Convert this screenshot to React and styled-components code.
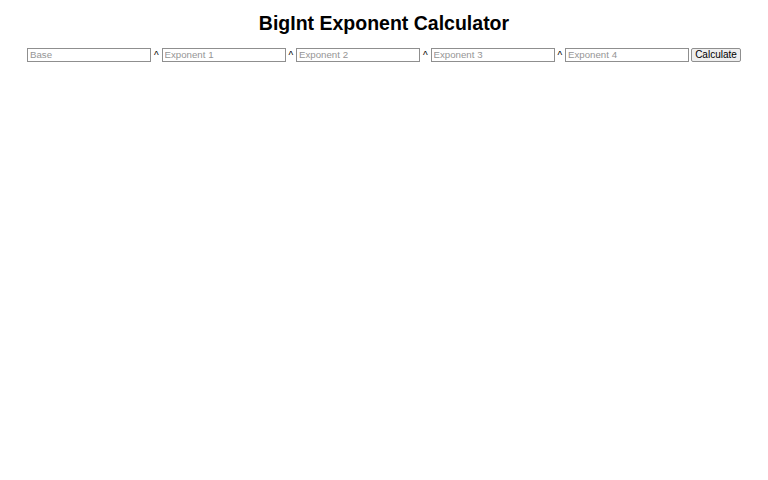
import React from 'react'
import styled, { createGlobalStyle } from 'styled-components'

const GlobalStyle = createGlobalStyle`
  body {
    margin: 0;
    background: #fff;
    font-family: "Liberation Sans", Arial, sans-serif;
  }
`

const Page = styled.div`
  padding-top: 12px;
  text-align: center;
`

const Title = styled.h1`
  margin: 0 0 13px;
  font-size: 19.5px;
  line-height: 23px;
  font-weight: bold;
  color: #000;
`

const Form = styled.div`
  display: flex;
  justify-content: center;
  align-items: center;
  font-size: 10px;
`

const NumberInput = styled.input`
  box-sizing: border-box;
  width: 124px;
  height: 14px;
  padding: 0 2px 1px;
  border: 1px solid #8f8f8f;
  font-family: "Liberation Sans", Arial, sans-serif;
  font-size: 9.7px;
  line-height: 11px;
  color: #000;
  background: #fff;
  &::placeholder {
    color: #959595;
  }
`

const Caret = styled.span`
  width: 10.5px;
  text-align: center;
  color: #000;
  font-size: 10px;
`

const Button = styled.button`
  box-sizing: border-box;
  margin-left: 2px;
  width: 50px;
  height: 14px;
  padding: 0 0 1px;
  border: 1px solid #8f8f8f;
  border-radius: 2px;
  background: #efefef;
  font-family: "Liberation Sans", Arial, sans-serif;
  font-size: 10px;
  line-height: 11px;
  color: #000;
`

const fields = ['Base', 'Exponent 1', 'Exponent 2', 'Exponent 3', 'Exponent 4']

export default function App() {
  return (
    <Page>
      <GlobalStyle />
      <Title>BigInt Exponent Calculator</Title>
      <Form>
        {fields.map((f, i) => (
          <React.Fragment key={f}>
            {i > 0 && <Caret>^</Caret>}
            <NumberInput type="text" placeholder={f} />
          </React.Fragment>
        ))}
        <Button>Calculate</Button>
      </Form>
    </Page>
  )
}
